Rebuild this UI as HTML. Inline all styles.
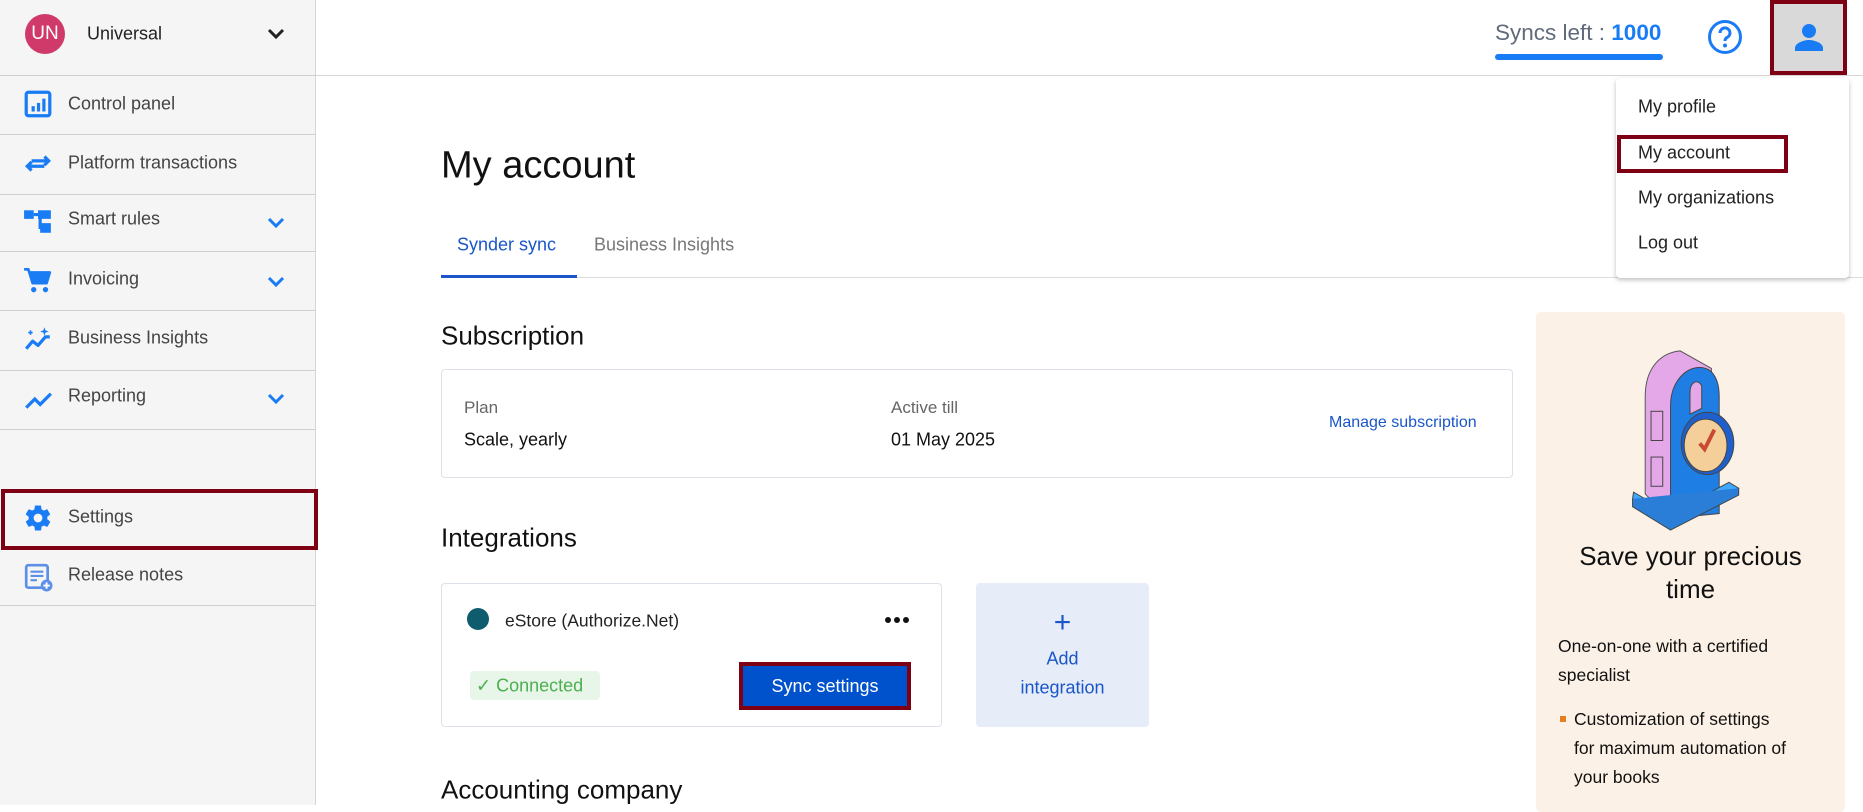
<!DOCTYPE html>
<html><head><meta charset="utf-8"><style>
*{box-sizing:border-box;margin:0;padding:0}
body{width:1863px;height:805px;overflow:hidden;background:#fff;font-family:"Liberation Sans",Arial,sans-serif;position:relative;color:#222}
.abs{position:absolute}
.sb{left:0;top:0;width:316px;height:805px;background:#f5f5f5;border-right:1px solid #d6d6d6}
.sep{position:absolute;left:0;width:316px;height:1px;background:#d0d0d0}
.nav{position:absolute;left:68px;font-size:18px;color:#444;transform:translateY(-50%)}
.ic{position:absolute;left:23px;width:30px;height:30px;transform:translateY(-50%)}
.chev{position:absolute;left:265px;transform:translateY(-50%)}
.t{position:absolute;transform:translateY(-50%);white-space:nowrap}
</style></head><body>
<div class="abs sb"></div>
<div class="abs" style="left:316px;top:75px;width:1547px;height:1px;background:#d6d6d6"></div>
<div class="abs" style="left:25px;top:14px;width:40px;height:40px;border-radius:50%;background:#cf3a6a;color:#fff;font-size:19px;text-align:center;line-height:40px">UN</div>
<div class="t" style="left:87px;top:34px;font-size:18px;color:#222">Universal</div>
<svg class="abs" style="left:266px;top:27px" width="20" height="14" viewBox="0 0 20 14"><path d="M3 3l7 7 7-7" fill="none" stroke="#222" stroke-width="3"/></svg>

<div class="sep" style="top:75px"></div><div class="sep" style="top:134px"></div><div class="sep" style="top:194px"></div><div class="sep" style="top:251px"></div><div class="sep" style="top:310px"></div><div class="sep" style="top:370px"></div><div class="sep" style="top:429px"></div><div class="sep" style="top:605px"></div>

<svg class="ic" style="top:104px" viewBox="0 0 28 28"><rect x="3" y="3" width="22" height="22" rx="2" fill="none" stroke="#1a7cf5" stroke-width="3"/><rect x="8" y="16" width="3" height="5" fill="#1a7cf5"/><rect x="13" y="13" width="3" height="8" fill="#1a7cf5"/><rect x="18" y="9" width="3" height="12" fill="#1a7cf5"/></svg>
<div class="nav" style="top:104px">Control panel</div>
<svg class="ic" style="top:163px" viewBox="0 0 28 28"><path d="M8 12h16M20 8l4 4-4 4M20 17H4M8 13l-4 4 4 4" fill="none" stroke="#1a7cf5" stroke-width="3"/></svg>
<div class="nav" style="top:163px">Platform transactions</div>
<svg class="ic" style="top:221px" viewBox="0 0 28 28"><rect x="1" y="4" width="9" height="8" fill="#1a7cf5"/><rect x="14" y="4" width="12" height="8" fill="#1a7cf5"/><rect x="16" y="16" width="10" height="9" fill="#1a7cf5"/><path d="M10 8h5M16 10v10h2" stroke="#1a7cf5" stroke-width="3" fill="none"/></svg>
<div class="nav" style="top:219px">Smart rules</div>
<svg class="ic" style="top:280px" viewBox="0 0 28 28"><path d="M1 4h4l4 13h13l3-10H7" fill="#1a7cf5" stroke="#1a7cf5" stroke-width="2.5" stroke-linejoin="round"/><circle cx="10" cy="23" r="2.5" fill="#1a7cf5"/><circle cx="21" cy="23" r="2.5" fill="#1a7cf5"/></svg>
<div class="nav" style="top:279px">Invoicing</div>
<svg class="ic" style="top:339px" viewBox="0 0 28 28"><path d="M3 23l6-7 5 4 7-8 4 0" fill="none" stroke="#1a7cf5" stroke-width="3" stroke-linejoin="round"/><path d="M20 3l1 3 3 1-3 1-1 3-1-3-3-1 3-1z" fill="#1a7cf5"/><path d="M5 8h4M7 6v4" stroke="#1a7cf5" stroke-width="1.5"/></svg>
<div class="nav" style="top:338px">Business Insights</div>
<svg class="ic" style="top:398px" viewBox="0 0 28 28"><path d="M3 23l8-8 5 5 10-10" fill="none" stroke="#1a7cf5" stroke-width="3"/></svg>
<div class="nav" style="top:396px">Reporting</div>
<svg class="chev" style="top:223px;left:266px" width="20" height="14" viewBox="0 0 20 14"><path d="M3 3l7 7 7-7" fill="none" stroke="#1a7cf5" stroke-width="3"/></svg>
<svg class="chev" style="top:282px;left:266px" width="20" height="14" viewBox="0 0 20 14"><path d="M3 3l7 7 7-7" fill="none" stroke="#1a7cf5" stroke-width="3"/></svg>
<svg class="chev" style="top:399px;left:266px" width="20" height="14" viewBox="0 0 20 14"><path d="M3 3l7 7 7-7" fill="none" stroke="#1a7cf5" stroke-width="3"/></svg>

<div class="abs" style="left:1px;top:489px;width:317px;height:61px;border:4px solid #7d0014"></div>
<svg class="ic" style="top:518px" viewBox="0 0 24 24"><path fill="#1a7cf5" d="M19.4 13c.04-.3.06-.6.06-1s-.02-.7-.06-1l2.1-1.6c.2-.15.25-.42.12-.64l-2-3.46c-.12-.22-.39-.3-.61-.22l-2.5 1c-.52-.4-1.08-.73-1.690-.98l-.38-2.650A.49.49 0 0 0 14 2h-4c-.25 0-.46.18-.49.42l-.38 2.65c-.61.25-1.17.59-1.69.98l-2.5-1c-.23-.09-.49 0-.61.22l-2 3.46c-.13.22-.07.49.12.64L4.57 11c-.04.32-.07.65-.07 1s.02.68.06 1l-2.1 1.65c-.19.15-.25.42-.12.64l2 3.46c.12.22.39.3.61.22l2.5-1c.52.4 1.08.73 1.69.98l.38 2.65c.03.24.24.42.49.42h4c.25 0 .46-.18.49-.42l.38-2.65c.61-.25 1.17-.59 1.69-.98l2.5 1c.23.09.49 0 .61-.22l2-3.46c.12-.22.07-.49-.12-.64L19.4 13zM12 15.5A3.5 3.5 0 1 1 12 8.5a3.5 3.5 0 0 1 0 7z"/></svg>
<div class="nav" style="top:517px">Settings</div>
<svg class="ic" style="top:577px" viewBox="0 0 28 28"><rect x="3" y="3" width="20" height="21" rx="2" fill="none" stroke="#5b8fe8" stroke-width="2.5"/><path d="M7 9h12M7 13h12M7 17h6" stroke="#5b8fe8" stroke-width="2"/><circle cx="22" cy="22" r="5.5" fill="#5b8fe8"/><path d="M22 19v6M19 22h6" stroke="#fff" stroke-width="1.8"/></svg>
<div class="nav" style="top:575px">Release notes</div>

<div class="t" style="left:1495px;top:33px;font-size:22.5px;color:#5f6b7c">Syncs left : <span style="color:#1a7cf5;font-weight:bold">1000</span></div>
<div class="abs" style="left:1495px;top:54px;width:168px;height:6px;border-radius:3px;background:#1a7cf5"></div>
<svg class="abs" style="left:1707px;top:19px" width="36" height="36" viewBox="0 0 36 36"><circle cx="18" cy="18" r="15.5" fill="none" stroke="#1a7cf5" stroke-width="3"/><path d="M13 14a5 5 0 1 1 7 4.5c-1.5.8-2 1.6-2 3.5" fill="none" stroke="#1a7cf5" stroke-width="3"/><circle cx="18" cy="26.5" r="2" fill="#1a7cf5"/></svg>
<div class="abs" style="left:1770px;top:0;width:77px;height:75px;background:#d9d9d9;border:4px solid #7d0014"></div>
<svg class="abs" style="left:1793px;top:21px" width="32" height="32" viewBox="0 0 32 32"><circle cx="16" cy="10" r="7" fill="#1a7cf5"/><path d="M2 30v-3c0-5 9-8 14-8s14 3 14 8v3z" fill="#1a7cf5"/></svg>

<div class="t" style="left:441px;top:166px;font-size:38px;color:#111">My account</div>
<div class="t" style="left:457px;top:245px;font-size:18px;color:#1a56c9">Synder sync</div>
<div class="t" style="left:594px;top:245px;font-size:18px;color:#777">Business Insights</div>
<div class="abs" style="left:441px;top:277px;width:1422px;height:1px;background:#dcdcdc"></div>
<div class="abs" style="left:441px;top:275px;width:136px;height:3px;background:#1a56c9"></div>

<div class="t" style="left:441px;top:336px;font-size:26px;color:#111">Subscription</div>
<div class="abs" style="left:441px;top:369px;width:1072px;height:109px;border:1px solid #dde1ea;border-radius:4px"></div>
<div class="t" style="left:464px;top:408px;font-size:17px;color:#666">Plan</div>
<div class="t" style="left:464px;top:440px;font-size:18px;color:#111">Scale, yearly</div>
<div class="t" style="left:891px;top:408px;font-size:17px;color:#666">Active till</div>
<div class="t" style="left:891px;top:440px;font-size:18px;color:#111">01 May 2025</div>
<div class="t" style="left:1329px;top:423px;font-size:16px;color:#1a56c9">Manage subscription</div>

<div class="t" style="left:441px;top:538px;font-size:26px;color:#111">Integrations</div>
<div class="abs" style="left:441px;top:583px;width:501px;height:144px;border:1px solid #dde1ea;border-radius:4px"></div>
<div class="abs" style="left:467px;top:608px;width:22px;height:22px;border-radius:50%;background:#0f5c6e"></div>
<div class="t" style="left:505px;top:621px;font-size:17.5px;color:#222">eStore (Authorize.Net)</div>
<svg class="abs" style="left:884px;top:616px" width="26" height="8" viewBox="0 0 26 8"><circle cx="4" cy="4" r="3" fill="#111"/><circle cx="13" cy="4" r="3" fill="#111"/><circle cx="22" cy="4" r="3" fill="#111"/></svg>
<div class="abs" style="left:470px;top:671px;width:130px;height:29px;background:#e8f5e9;border-radius:4px"></div>
<div class="t" style="left:476px;top:686px;font-size:18px;color:#4caf50">✓ Connected</div>
<div class="abs" style="left:739px;top:662px;width:172px;height:48px;border:4px solid #7d0014;background:#0052cc;color:#fff;font-size:18px;text-align:center;line-height:40px">Sync settings</div>
<div class="abs" style="left:976px;top:583px;width:173px;height:144px;background:#e6edf8;border-radius:4px"></div>
<div class="t" style="left:976px;width:173px;text-align:center;top:623px;font-size:30px;color:#1a56c9">+</div>
<div class="t" style="left:976px;width:173px;text-align:center;top:659px;font-size:18px;color:#1a56c9">Add</div>
<div class="t" style="left:976px;width:173px;text-align:center;top:688px;font-size:18px;color:#1a56c9">integration</div>
<div class="t" style="left:441px;top:790px;font-size:26px;color:#111">Accounting company</div>

<div class="abs" style="left:1536px;top:312px;width:309px;height:500px;background:#fcf1e6;border-radius:5px"></div>
<svg class="abs" style="left:1630px;top:348px" width="120" height="185" viewBox="0 0 120 190">
<path d="M14 150V50C14 20 30 5 50 3l32 18v130L40 175z" fill="#e4a8e8" stroke="#555" stroke-width="1"/>
<path d="M40 175V60c0-25 15-40 30-40s20 15 20 30v120z" fill="#1f7ee3" stroke="#444" stroke-width="1"/>
<path d="M1 155l39 25 70-36-10-6-60 32-38-22z" fill="#3fa8ff" stroke="#444" stroke-width="1"/>
<path d="M1 155v8l39 24 70-36v-7" fill="#2a7ed8" stroke="#444" stroke-width="1"/>
<path d="M60 68V45c0-10 8-14 12-6v23z" fill="#e4a8e8" stroke="#444"/>
<rect x="20" y="65" width="12" height="30" fill="none" stroke="#444"/><rect x="20" y="112" width="12" height="30" fill="none" stroke="#444"/>
<ellipse cx="78" cy="98" rx="27" ry="32" fill="#1f5fcc" stroke="#444"/>
<ellipse cx="76" cy="100" rx="22" ry="27" fill="#f4cf99" stroke="#444"/>
<path d="M70 98l5 6 10-20" fill="none" stroke="#c84a30" stroke-width="4"/>
</svg>
<div class="abs" style="left:1536px;width:309px;text-align:center;top:540px;font-size:26px;line-height:33px;color:#111">Save your precious<br>time</div>
<div class="abs" style="left:1558px;top:632px;font-size:17.5px;line-height:29px;color:#111">One-on-one with a certified<br>specialist</div>
<div class="abs" style="left:1560px;top:716px;width:6px;height:6px;background:#e67e22"></div>
<div class="abs" style="left:1574px;top:705px;font-size:17.5px;line-height:29px;color:#111">Customization of settings<br>for maximum automation of<br>your books</div>

<div class="abs" style="left:1616px;top:78px;width:233px;height:200px;background:#fff;border-radius:4px;box-shadow:0 2px 5px rgba(0,0,0,.25)"></div>
<div class="t" style="left:1638px;top:107px;font-size:18px;color:#222">My profile</div>
<div class="abs" style="left:1617px;top:135px;width:171px;height:38px;border:4px solid #7d0014"></div>
<div class="t" style="left:1638px;top:153px;font-size:18px;color:#222">My account</div>
<div class="t" style="left:1638px;top:198px;font-size:18px;color:#222">My organizations</div>
<div class="t" style="left:1638px;top:243px;font-size:18px;color:#222">Log out</div>
</body></html>
